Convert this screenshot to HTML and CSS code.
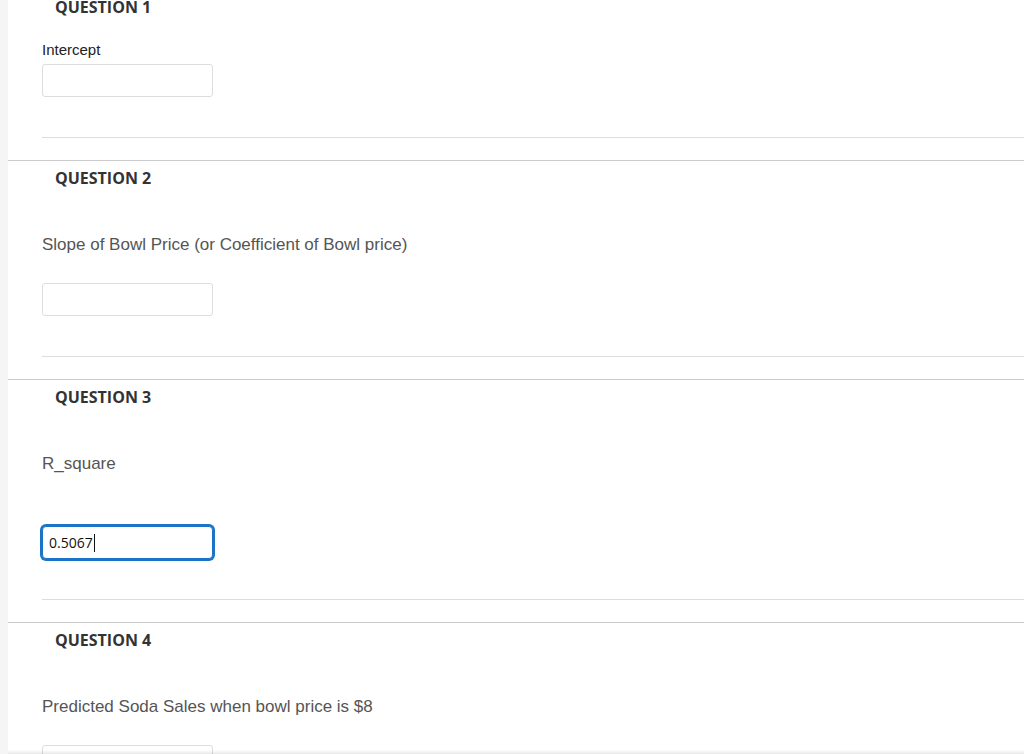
FILE: index.html
```html
<!DOCTYPE html>
<html>
<head>
<meta charset="utf-8">
<link rel="stylesheet" href="styles.css">
</head>
<body>
<div class="page">
  <div class="rail"></div>
  <main class="content">
    <section class="question first">
      <h3 class="q-title">QUESTION 1</h3>
      <div class="q-body">
        <p class="q-text dark">Intercept</p>
        <div class="field tight"></div>
      </div>
      <hr class="q-rule">
    </section>
    <section class="question">
      <h3 class="q-title">QUESTION 2</h3>
      <div class="q-body">
        <p class="q-text">Slope of Bowl Price (or Coefficient of Bowl price)</p>
        <div class="field"></div>
      </div>
      <hr class="q-rule">
    </section>
    <section class="question">
      <h3 class="q-title">QUESTION 3</h3>
      <div class="q-body">
        <p class="q-text">R_square</p>
        <div class="field focused spaced"><span class="value">0.5067</span><span class="caret"></span></div>
      </div>
      <hr class="q-rule">
    </section>
    <section class="question">
      <h3 class="q-title">QUESTION 4</h3>
      <div class="q-body">
        <p class="q-text">Predicted Soda Sales when bowl price is $8</p>
        <div class="field"></div>
      </div>
    </section>
  </main>
</div>
<div class="bottom-shade"></div>
</body>
</html>
```

FILE: styles.css
```css
html, body {
  margin: 0;
  padding: 0;
  background: #ffffff;
  height: 754px;
  overflow: hidden;
}

.page {
  display: flex;
  min-height: 754px;
}

.rail {
  width: 8px;
  flex: 0 0 8px;
  background: #f5f5f5;
}

.content {
  flex: 1;
  min-width: 0;
}

.question {
  border-top: 1px solid #cccccc;
  padding-top: 6px;
}

.question.first {
  border-top: none;
  padding-top: 0;
}

.q-title {
  margin: 0;
  padding-left: 47px;
  font-family: "Open Sans", "DejaVu Sans", sans-serif;
  font-weight: 700;
  font-size: 16px;
  line-height: 22px;
  color: #333333;
}

.first .q-title {
  line-height: 15px;
}

.q-body {
  padding-left: 34px;
}

.q-text {
  margin: 46px 0 0 0;
  font-family: "Liberation Sans", Arial, sans-serif;
  font-size: 17px;
  line-height: 20px;
  color: #555555;
}

.q-text.dark {
  margin-top: 25px;
  font-size: 15px;
  color: #222222;
}

.field {
  box-sizing: border-box;
  width: 171px;
  height: 33px;
  margin-top: 28px;
  border: 1px solid #dddddd;
  border-radius: 3px;
  background: #ffffff;
  display: flex;
  align-items: center;
  padding-left: 6px;
}

.field.tight {
  margin-top: 4px;
}

.field.spaced {
  margin-top: 52px;
}

.field.focused {
  border-color: #1b74c8;
  box-shadow: 0 0 0 2px #1b74c8;
  border-radius: 4px;
}

.value {
  font-family: "Open Sans", "DejaVu Sans", sans-serif;
  font-size: 14px;
  color: #111111;
}

.caret {
  display: inline-block;
  width: 1px;
  height: 18px;
  background: #111111;
  margin-left: 1px;
}

.q-rule {
  margin: 40px 0 22px 34px;
  border: none;
  border-top: 1px solid #dddddd;
  height: 0;
}

.bottom-shade {
  position: fixed;
  left: 8px;
  right: 0;
  bottom: 0;
  height: 4px;
  background: linear-gradient(to bottom, rgba(0,0,0,0), rgba(0,0,0,0.09));
}
```
